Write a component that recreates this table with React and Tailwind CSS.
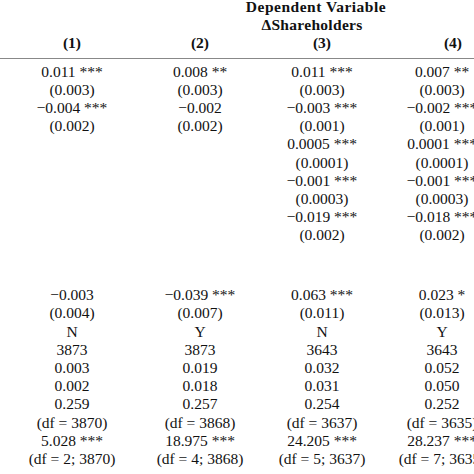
import React from "react";

const M = "\u2212";

const sectionA = [
  ["0.011 ***", "0.008 **", "0.011 ***", "0.007 **"],
  ["(0.003)", "(0.003)", "(0.003)", "(0.003)"],
  [M + "0.004 ***", M + "0.002", M + "0.003 ***", M + "0.002 ***"],
  ["(0.002)", "(0.002)", "(0.001)", "(0.001)"],
  ["", "", "0.0005 ***", "0.0001 ***"],
  ["", "", "(0.0001)", "(0.0001)"],
  ["", "", M + "0.001 ***", M + "0.001 ***"],
  ["", "", "(0.0003)", "(0.0003)"],
  ["", "", M + "0.019 ***", M + "0.018 ***"],
  ["", "", "(0.002)", "(0.002)"],
];

const sectionB = [
  [M + "0.003", M + "0.039 ***", "0.063 ***", "0.023 *"],
  ["(0.004)", "(0.007)", "(0.011)", "(0.013)"],
  ["N", "Y", "N", "Y"],
  ["3873", "3873", "3643", "3643"],
  ["0.003", "0.019", "0.032", "0.052"],
  ["0.002", "0.018", "0.031", "0.050"],
  ["0.259", "0.257", "0.254", "0.252"],
  ["(df = 3870)", "(df = 3868)", "(df = 3637)", "(df = 3635)"],
  ["5.028 ***", "18.975 ***", "24.205 ***", "28.237 ***"],
  ["(df = 2; 3870)", "(df = 4; 3868)", "(df = 5; 3637)", "(df = 7; 3635)"],
];

function Section({ rows }) {
  return (
    <div className="grid grid-cols-[144px_112px_132px_108px] w-[496px]">
      {rows.map((r, i) =>
        r.map((c, j) => (
          <div key={i + "-" + j} className="text-center whitespace-nowrap h-[18.2px]">
            {c}
          </div>
        ))
      )}
    </div>
  );
}

export default function App() {
  return (
    <div
      className="w-[474px] h-[474px] overflow-hidden bg-white text-[#111111] text-[15.5px] leading-[18.2px]"
      style={{ fontFamily: '"Liberation Serif", "Times New Roman", serif' }}
    >
      <div className="mt-[-2px] pl-[158px] text-center font-bold tracking-[0.5px] whitespace-nowrap">
        Dependent Variable
      </div>
      <div className="pl-[150px] text-center font-bold tracking-[0.3px] whitespace-nowrap">
        ΔShareholders
      </div>
      <div className="grid grid-cols-[144px_112px_132px_108px] w-[496px] font-bold">
        <div className="text-center">(1)</div>
        <div className="text-center">(2)</div>
        <div className="text-center">(3)</div>
        <div className="text-center pl-[22px]">(4)</div>
      </div>
      <div className="mt-[5px] h-[1.5px] bg-[#888888]" />
      <div className="mt-[3.5px]">
        <Section rows={sectionA} />
      </div>
      <div className="mt-[41.8px]">
        <Section rows={sectionB} />
      </div>
    </div>
  );
}
